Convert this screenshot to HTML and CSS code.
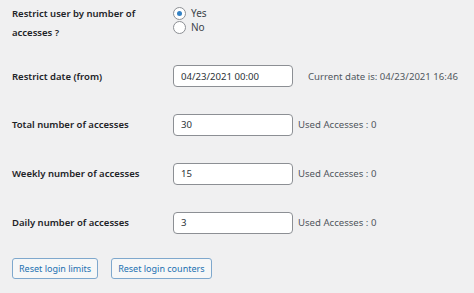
FILE: index.html
```html
<!DOCTYPE html>
<html lang="en">
<head>
    <meta charset="UTF-8">
    <title>Access limits</title>
    <link rel="stylesheet" href="styles.css">
</head>
<body>
    <div class="settings">
        <div class="row row-radio">
            <div class="label">Restrict user by number of accesses ?</div>
            <div class="field radios">
                <label class="radio"><span class="dot checked"></span>Yes</label>
                <label class="radio"><span class="dot"></span>No</label>
            </div>
        </div>

        <div class="row row-date">
            <div class="label">Restrict date (from)</div>
            <div class="field">
                <input class="text" type="text" value="04/23/2021 00:00">
                <span class="note wide">Current date is: 04/23/2021 16:46</span>
            </div>
        </div>

        <div class="row">
            <div class="label">Total number of accesses</div>
            <div class="field">
                <input class="text" type="text" value="30">
                <span class="note">Used Accesses : 0</span>
            </div>
        </div>

        <div class="row">
            <div class="label">Weekly number of accesses</div>
            <div class="field">
                <input class="text" type="text" value="15">
                <span class="note">Used Accesses : 0</span>
            </div>
        </div>

        <div class="row">
            <div class="label">Daily number of accesses</div>
            <div class="field">
                <input class="text" type="text" value="3">
                <span class="note">Used Accesses : 0</span>
            </div>
        </div>

        <div class="actions">
            <button class="button">Reset login limits</button>
            <button class="button">Reset login counters</button>
        </div>
    </div>
</body>
</html>
```

FILE: styles.css
```css
body {
    margin: 0;
    background-color: #f0f0f1;
    font-family: 'Noto Sans', sans-serif;
    font-size: 9.6px;
    color: #1d2327;
}

.settings {
    padding: 0 0 0 12px;
}

.row {
    display: flex;
    align-items: center;
    height: 49px;
    white-space: nowrap;
}

.row-date {
    height: 48px;
}

.row-radio {
    align-items: flex-start;
    height: 52px;
    padding-top: 4px;
    box-sizing: border-box;
}

.label {
    width: 161px;
    flex-shrink: 0;
    font-size: 9.5px;
    font-weight: 600;
    line-height: 19px;
    color: #1d2327;
}

.row-radio .label {
    width: 150px;
    margin-right: 11px;
    white-space: normal;
}

.field {
    display: flex;
    align-items: center;
}

.radios {
    flex-direction: column;
    align-items: flex-start;
    padding-top: 2px;
}

.radio {
    display: flex;
    align-items: center;
    height: 14px;
    line-height: 14px;
    font-size: 10px;
    color: #3c434a;
}

.dot {
    width: 11px;
    height: 11px;
    border: 1px solid #8c8f94;
    border-radius: 50%;
    background: #fff;
    margin-right: 5px;
    position: relative;
}

.dot.checked::after {
    content: "";
    position: absolute;
    left: 3px;
    top: 3px;
    width: 5px;
    height: 5px;
    border-radius: 50%;
    background: #3582c4;
}

.text {
    width: 120px;
    height: 22px;
    box-sizing: border-box;
    border: 1px solid #8c8f94;
    border-radius: 4px;
    background: #fff;
    padding: 0 7px;
    font-family: inherit;
    font-size: 9.6px;
    color: #2c3338;
    margin: 0;
}

.note {
    margin-left: 5px;
    color: #50575e;
}

.note.wide {
    margin-left: 15px;
}

.actions {
    display: flex;
    gap: 13px;
    margin-top: 11px;
}

.button {
    height: 21px;
    padding: 0 6px;
    font-family: inherit;
    font-size: 9px;
    color: #2271b1;
    background: #f6f7f7;
    border: 1px solid #7fa8cd;
    border-radius: 3px;
    cursor: pointer;
}
```
